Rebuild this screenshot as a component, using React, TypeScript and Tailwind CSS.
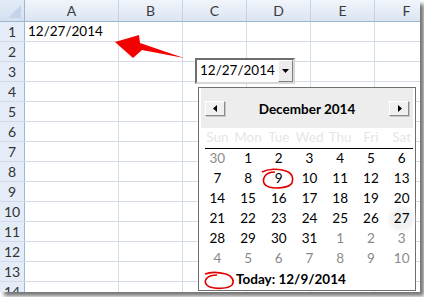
import React from "react";

const cols = [
  { l: "A", w: "w-[94px]" },
  { l: "B", w: "w-[64px]" },
  { l: "C", w: "w-[64px]" },
  { l: "D", w: "w-[64px]" },
  { l: "E", w: "w-[64px]" },
  { l: "F", w: "w-[64px]" },
];

type D = { n: number; g?: boolean };
const weeks: D[][] = [
  [{ n: 30, g: true }, { n: 1 }, { n: 2 }, { n: 3 }, { n: 4 }, { n: 5 }, { n: 6 }],
  [{ n: 7 }, { n: 8 }, { n: 9 }, { n: 10 }, { n: 11 }, { n: 12 }, { n: 13 }],
  [{ n: 14 }, { n: 15 }, { n: 16 }, { n: 17 }, { n: 18 }, { n: 19 }, { n: 20 }],
  [{ n: 21 }, { n: 22 }, { n: 23 }, { n: 24 }, { n: 25 }, { n: 26 }, { n: 27 }],
  [{ n: 28 }, { n: 29 }, { n: 30 }, { n: 31 }, { n: 1, g: true }, { n: 2, g: true }, { n: 3, g: true }],
  [4, 5, 6, 7, 8, 9, 10].map((n) => ({ n, g: true })),
];

const dayNames = ["Sun", "Mon", "Tue", "Wed", "Thu", "Fri", "Sat"];

function NavButton({ dir }: { dir: "l" | "r" }) {
  return (
    <div className="w-[20px] h-[15px] bg-[#f0f0f0] border border-t-white border-l-white border-r-[#8a8a8a] border-b-[#8a8a8a] flex items-center justify-center shadow-[1px_1px_0_#c8c8c8]">
      <svg width="5" height="7" viewBox="0 0 5 7">
        {dir === "l" ? <path d="M4 0 L0 3.5 L4 7 Z" fill="#000" /> : <path d="M1 0 L5 3.5 L1 7 Z" fill="#000" />}
      </svg>
    </div>
  );
}

export default function App() {
  return (
    <div className="relative w-[424px] h-[297px] bg-white overflow-hidden font-['Lato',sans-serif]">
      <div className="w-[420px] h-[292px] overflow-hidden bg-white shadow-[4px_4px_4px_rgba(0,0,0,0.55)]">
        {/* column header */}
        <div className="flex h-[22px] border-b border-[#9eb6ce] bg-gradient-to-b from-[#f1f5fb] to-[#dbe5f2]">
          <div className="w-[25px] shrink-0 border-r border-[#9eb6ce] bg-gradient-to-b from-[#e3ebf6] to-[#d5e0ef] relative">
            <svg className="absolute right-[3px] bottom-[3px]" width="13" height="13" viewBox="0 0 13 13">
              <path d="M13 0 L13 13 L0 13 Z" fill="#c3d3e8" />
            </svg>
          </div>
          {cols.map((c) => (
            <div
              key={c.l}
              className={`${c.w} shrink-0 border-r border-[#c5d2e3] flex items-center justify-center text-[14px] text-[#3b3b3b]`}
            >
              {c.l}
            </div>
          ))}
        </div>
        {Array.from({ length: 14 }, (_, i) => (
          <div key={i} className="flex h-[20px] border-b border-[#d4dae6]">
            <div className="w-[25px] shrink-0 bg-[#e4ecf7] border-r border-[#9eb6ce] flex items-center justify-center text-[14px] text-[#333]">
              {i + 1}
            </div>
            {cols.map((c, j) => (
              <div
                key={c.l}
                className={`${c.w} shrink-0 border-r border-[#d4dae6] flex items-center px-[3px] text-[13.5px] text-black`}
              >
                {i === 0 && j === 0 ? "12/27/2014" : ""}
              </div>
            ))}
          </div>
        ))}
      </div>

      {/* red arrow */}
      <svg className="absolute left-0 top-0 pointer-events-none" width="424" height="297" viewBox="0 0 424 297">
        <path d="M115 42 L139 35 L140 43 L184 58 L142 50 L133 58 Z" fill="#f30000" />
      </svg>

      {/* dropdown box */}
      <div className="absolute left-[195px] top-[58px] w-[100px] h-[26px] bg-white border-2 border-t-[#6e6e6e] border-l-[#6e6e6e] border-r-[#d8d8d8] border-b-[#d8d8d8] flex items-center">
        <div className="flex-1 pl-[3px] text-[13.5px] text-black leading-none">12/27/2014</div>
        <div className="w-[15px] h-[22px] bg-[#ececec] border border-t-white border-l-white border-r-[#808080] border-b-[#808080] flex items-center justify-center">
          <svg width="7" height="4" viewBox="0 0 7 4">
            <path d="M0 0 L7 0 L3.5 4 Z" fill="#000" />
          </svg>
        </div>
      </div>

      {/* calendar popup */}
      <div className="absolute left-[198px] top-[87px] w-[218px] h-[204px] bg-white border border-[#6f6f6f]">
        <div className="mx-[2px] h-[40px] bg-[#ededed] flex items-center justify-between px-[4px] relative">
          <NavButton dir="l" />
          <div className="absolute inset-0 flex items-center justify-center text-[13.5px] font-bold text-black pt-[2px]">
            December 2014
          </div>
          <NavButton dir="r" />
        </div>
        <div className="ml-[3px] w-[215px] grid grid-cols-7 h-[20px] items-center text-[13.5px] text-[#e6e6e6]">
          {dayNames.map((d) => (
            <div key={d} className="text-center leading-none">
              {d}
            </div>
          ))}
        </div>
        <div className="ml-[6px] w-[208px] h-[1px] bg-black" />
        <div className="ml-[3px] w-[215px]">
          {weeks.map((w, i) => (
            <div key={i} className="grid grid-cols-7 h-[20px] items-center text-[13.5px]">
              {w.map((d, j) => (
                <div key={j} className="flex justify-center">
                  <span
                    className={`leading-none ${d.g ? "text-[#8a8a8a]" : "text-black"} ${
                      i === 3 && j === 6 ? "bg-[#f1f1f1] rounded-full px-[2px] py-[2px] shadow-[0_0_4px_3px_#f1f1f1]" : ""
                    }`}
                  >
                    {d.n}
                  </span>
                </div>
              ))}
            </div>
          ))}
        </div>
        <div className="h-[21px] flex items-center pl-[37px] text-[13.5px] font-bold text-black">Today: 12/9/2014</div>
      </div>

      {/* red hand-drawn circles */}
      <svg className="absolute left-0 top-0 pointer-events-none" width="424" height="297" viewBox="0 0 424 297">
        <path
          d="M262 172 C268 169, 278 168, 286 171 C292 173, 294 178, 292 183 C289 188, 276 189, 269 187 C263 185, 262 180, 265 176 C267 173, 271 172, 275 172"
          fill="none"
          stroke="#e00000"
          strokeWidth="1.6"
        />
        <path
          d="M205 274 C210 272, 218 272, 226 274 C232 276, 235 281, 232 285 C228 289, 216 289, 210 287 C205 285, 204 281, 207 278 C209 276, 213 275, 217 275"
          fill="none"
          stroke="#e00000"
          strokeWidth="1.6"
        />
      </svg>
    </div>
  );
}
